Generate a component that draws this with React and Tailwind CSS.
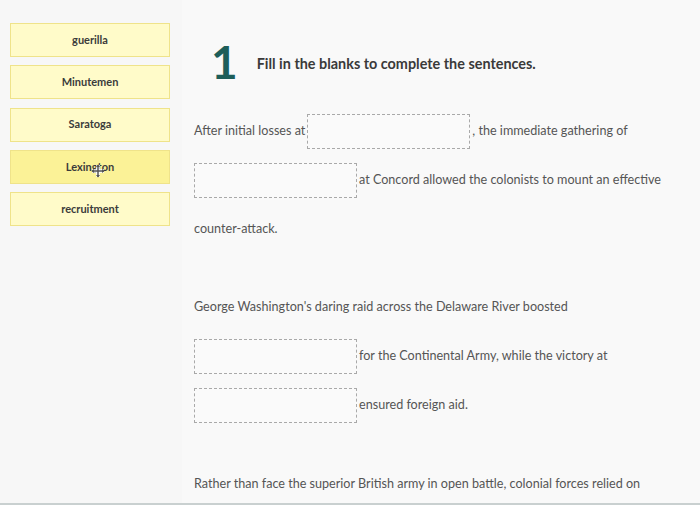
import React from 'react';

const words = ['guerilla', 'Minutemen', 'Saratoga', 'Lexington', 'recruitment'];

const Blank = () => (
  <span className="inline-block w-[163px] h-[35px] border border-dashed border-[#a9a9a9] bg-[#fafafa] shrink-0" />
);

const Row = ({ children }) => (
  <div className="flex items-center h-[49px] gap-[2px]">{children}</div>
);

const MoveCursor = () => (
  <svg className="absolute left-[80px] top-[13px]" width="14" height="14" viewBox="0 0 14 14">
    <path d="M7 1 L7 13 M1 7 L13 7" stroke="#fff" strokeWidth="3.5" />
    <path d="M7 1 L7 13 M1 7 L13 7" stroke="#555" strokeWidth="1.5" />
    <path d="M7 0.5 L5 3 L9 3 Z M7 13.5 L5 11 L9 11 Z M0.5 7 L3 5 L3 9 Z M13.5 7 L11 5 L11 9 Z" fill="#555" />
  </svg>
);

export default function App() {
  return (
    <div
      className="w-[700px] h-[505px] flex bg-[#f9f9f9] border-b-2 border-[#c9d0d0] overflow-hidden text-[#555]"
      style={{ fontFamily: 'Lato, "Open Sans", sans-serif' }}
    >
      {/* word bank */}
      <div className="w-[182px] shrink-0 bg-[#f7f7f7] pt-[23px] pl-[10px] flex flex-col gap-[8.3px]">
        {words.map((w) => (
          <div
            key={w}
            className={`relative w-[160px] h-[34px] flex items-center justify-center border border-[#efe38a] text-[11px] font-bold text-[#3b3b3b] ${
              w === 'Lexington' ? 'bg-[#fbf297]' : 'bg-[#fffbc9]'
            }`}
          >
            {w}
            {w === 'Lexington' && <MoveCursor />}
          </div>
        ))}
      </div>

      {/* exercise */}
      <div className="flex-1 pl-[12px]">
        <div className="flex items-center h-[34px] mt-[45px] pl-[17px]">
          <span className="text-[46px] font-bold leading-none text-[#1e5e59]">1</span>
          <span className="ml-[19px] mt-[3px] text-[14.4px] font-bold text-[#3a3a3a]">
            Fill in the blanks to complete the sentences.
          </span>
        </div>

        <div className="mt-[28px] text-[12.6px]">
          <Row>
            <span>After initial losses at</span>
            <Blank />
            <span>, the immediate gathering of</span>
          </Row>
          <Row>
            <Blank />
            <span>at Concord allowed the colonists to mount an effective</span>
          </Row>
          <Row>
            <span>counter-attack.</span>
          </Row>
        </div>

        <div className="mt-[29px] text-[12.6px]">
          <Row>
            <span>George Washington's daring raid across the Delaware River boosted</span>
          </Row>
          <Row>
            <Blank />
            <span>for the Continental Army, while the victory at</span>
          </Row>
          <Row>
            <Blank />
            <span>ensured foreign aid.</span>
          </Row>
        </div>

        <div className="mt-[30px] text-[12.6px]">
          <Row>
            <span>Rather than face the superior British army in open battle, colonial forces relied on</span>
          </Row>
        </div>
      </div>
    </div>
  );
}
